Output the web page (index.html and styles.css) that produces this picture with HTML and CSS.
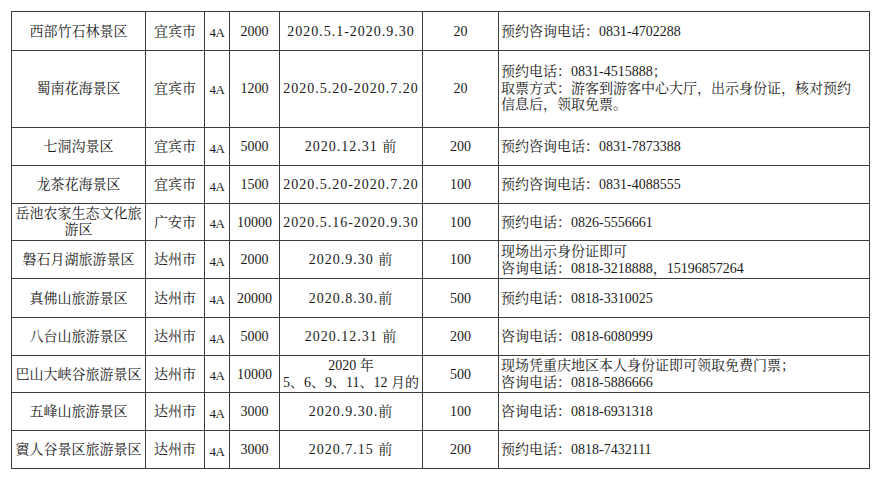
FILE: index.html
```html
<!DOCTYPE html>
<html lang="zh-CN">
<head>
<meta charset="utf-8">
<title>景区预约</title>
<link rel="stylesheet" href="styles.css">
</head>
<body>
<table class="sheet">
  <colgroup>
    <col class="c-name"><col class="c-city"><col class="c-lvl"><col class="c-num"><col class="c-date"><col class="c-qty"><col class="c-note">
  </colgroup>
  <tbody>
    <tr class="r39"><td>西部竹石林景区</td><td>宜宾市</td><td class="lvl">4A</td><td>2000</td><td class="date">2020.5.1-2020.9.30</td><td>20</td><td class="note">预约咨询电话：0831-4702288</td></tr>
    <tr class="r77"><td>蜀南花海景区</td><td>宜宾市</td><td class="lvl">4A</td><td>1200</td><td class="date">2020.5.20-2020.7.20</td><td>20</td><td class="note">预约电话：0831-4515888；<br>取票方式：游客到游客中心大厅，出示身份证，核对预约<br>信息后，领取免票。</td></tr>
    <tr class="r38 gtop"><td>七洞沟景区</td><td>宜宾市</td><td class="lvl">4A</td><td>5000</td><td class="date">2020.12.31 前</td><td>200</td><td class="note">预约咨询电话：0831-7873388</td></tr>
    <tr class="r38"><td>龙茶花海景区</td><td>宜宾市</td><td class="lvl">4A</td><td>1500</td><td class="date">2020.5.20-2020.7.20</td><td>100</td><td class="note">预约咨询电话：0831-4088555</td></tr>
    <tr class="r37"><td class="tight">岳池农家生态文化旅<br>游区</td><td>广安市</td><td class="lvl">4A</td><td>10000</td><td class="date">2020.5.16-2020.9.30</td><td>100</td><td class="note">预约电话：0826-5556661</td></tr>
    <tr class="r38"><td>磐石月湖旅游景区</td><td>达州市</td><td class="lvl">4A</td><td>2000</td><td class="date">2020.9.30 前</td><td>100</td><td class="note">现场出示身份证即可<br>咨询电话：0818-3218888，15196857264</td></tr>
    <tr class="r39"><td>真佛山旅游景区</td><td>达州市</td><td class="lvl">4A</td><td>20000</td><td class="date">2020.8.30.前</td><td>500</td><td class="note">预约电话：0818-3310025</td></tr>
    <tr class="r38"><td>八台山旅游景区</td><td>达州市</td><td class="lvl">4A</td><td>5000</td><td class="date">2020.12.31 前</td><td>200</td><td class="note">咨询电话：0818-6080999</td></tr>
    <tr class="r37"><td>巴山大峡谷旅游景区</td><td>达州市</td><td class="lvl">4A</td><td>10000</td><td class="wide">2020 年<br>5、6、9、11、12 月的</td><td>500</td><td class="note">现场凭重庆地区本人身份证即可领取免费门票；<br>咨询电话：0818-5886666</td></tr>
    <tr class="r38"><td>五峰山旅游景区</td><td>达州市</td><td class="lvl">4A</td><td>3000</td><td class="date">2020.9.30.前</td><td>100</td><td class="note">咨询电话：0818-6931318</td></tr>
    <tr class="r38"><td>賨人谷景区旅游景区</td><td>达州市</td><td class="lvl">4A</td><td>3000</td><td class="date">2020.7.15 前</td><td>200</td><td class="note">预约电话：0818-7432111</td></tr>
  </tbody>
</table>
</body>
</html>
```
FILE: styles.css
```css
html, body {
  margin: 0;
  padding: 0;
  background: #ffffff;
}

body {
  font-family: "Liberation Serif", "Noto Serif CJK SC", "Noto Sans CJK SC", serif;
  font-size: 14px;
  color: #1a1a1a;
}

.sheet {
  margin: 11px 0 0 11px;
  border-collapse: collapse;
  table-layout: fixed;
  width: 858px;
}

.c-name { width: 134px; }
.c-city { width: 59px; }
.c-lvl  { width: 25px; }
.c-num  { width: 50px; }
.c-date { width: 143px; }
.c-qty  { width: 76px; }
.c-note { width: 371px; }

.sheet td {
  border: 1px solid #3c3c3c;
  padding: 0 1px;
  text-align: center;
  vertical-align: middle;
  line-height: 17px;
  white-space: nowrap;
  overflow: hidden;
}

.sheet td:nth-child(2) {
  border-left-color: #8a8a8a;
}

.sheet td.note {
  text-align: left;
  padding: 0 2px;
  border-left-color: #7a7a7a;
}

.sheet td.lvl {
  font-size: 13px;
  letter-spacing: -0.5px;
  padding-top: 3px;
}

.sheet td.date {
  letter-spacing: 1px;
  padding: 0;
}

.sheet td.tight {
  line-height: 16px;
  padding: 0;
}

.sheet td.wide {
  padding: 0;
}

.r37 { height: 37px; }
.r38 { height: 38px; }
.r39 { height: 39px; }
.r77 { height: 77px; }

.r77 td { line-height: 16.5px; }

.gtop td {
  border-top-color: #8a8a8a;
}
```
